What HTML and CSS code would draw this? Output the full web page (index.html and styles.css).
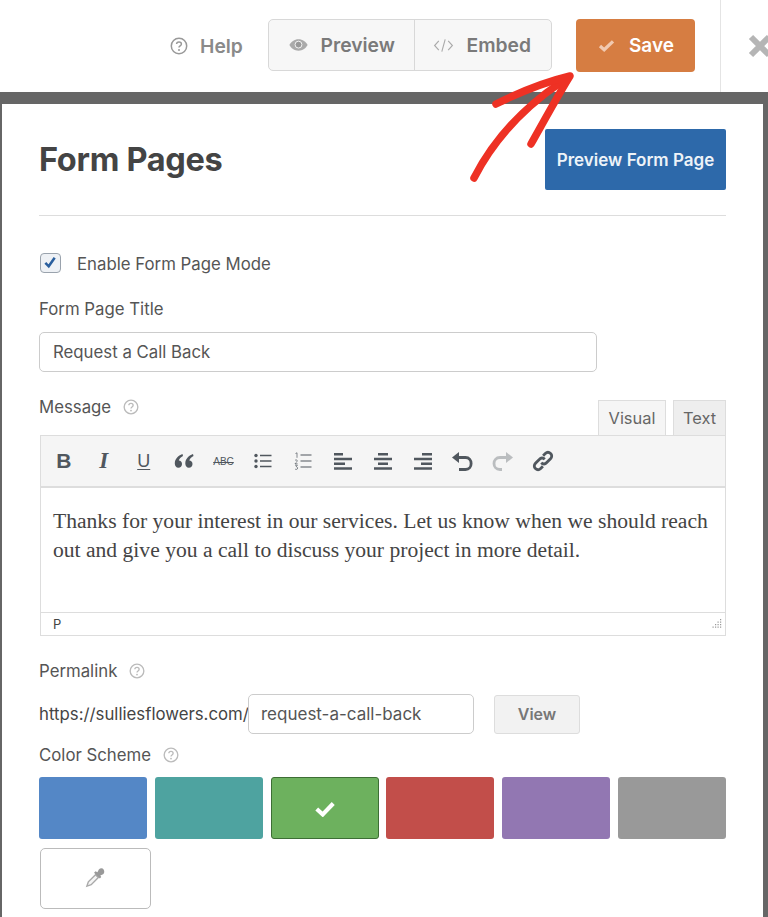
FILE: index.html
```html
<!DOCTYPE html>
<html lang="en">
<head>
<meta charset="utf-8">
<title>Form Pages</title>
<link rel="stylesheet" href="styles.css">
</head>
<body>
<header class="topbar">
  <div class="help">
    <svg class="q q-top" viewBox="0 0 18 18"><circle cx="9" cy="9" r="7.700"/><path d="M6.600 7.100c0-1.400 1.100-2.200 2.400-2.200s2.400.8 2.400 2.100c0 1.900-2.400 1.900-2.400 3.600"/><circle class="dot" cx="9" cy="13" r="1"/></svg>
    <span>Help</span>
  </div>
  <div class="btn-group">
    <div class="gbtn gbtn-preview">
      <svg class="ic-eye" viewBox="0 0 20 14"><path d="M10 1C5.600 1 2.200 3.800.4 7c1.800 3.200 5.200 6 9.600 6s7.800-2.800 9.600-6C17.800 3.800 14.400 1 10 1z"/><circle cx="10" cy="6.600" r="3.600" class="eye-in"/></svg>
      <span>Preview</span>
    </div>
    <div class="gbtn gbtn-embed">
      <svg class="ic-code" viewBox="0 0 22 16"><path d="M6 3 1.500 8 6 13M16 3l4.500 5L16 13M12.800 1.500 9.200 14.500"/></svg>
      <span>Embed</span>
    </div>
  </div>
  <div class="save">
    <svg class="ic-savecheck" viewBox="0 0 18 14"><path d="M2 7.500 6.500 11.500 16 2.500"/></svg>
    <span>Save</span>
  </div>
  <div class="closebox">
    <svg class="ic-x" viewBox="0 0 24 24"><path d="M3 3 21 21M21 3 3 21"/></svg>
  </div>
</header>

<main class="panel">
  <div class="panel-head">
    <h1>Form Pages</h1>
    <a class="preview-page">Preview Form Page</a>
  </div>
  <div class="check-row">
    <span class="checkbox"><svg viewBox="0 0 20 20"><path d="M4.500 10.500 8.500 14.500 15.500 4.500"/></svg></span>
    <span class="label">Enable Form Page Mode</span>
  </div>
  <div class="label title-label">Form Page Title</div>
  <div class="text-input title-input">Request a Call Back</div>

  <div class="msg-head">
    <div class="label with-q">Message
      <svg class="q" viewBox="0 0 18 18"><circle cx="9" cy="9" r="7.700"/><path d="M6.600 7.100c0-1.400 1.100-2.200 2.400-2.200s2.400.8 2.400 2.100c0 1.900-2.400 1.900-2.400 3.600"/><circle class="dot" cx="9" cy="13" r="1"/></svg>
    </div>
    <div class="tabs">
      <span class="tab tab-on">Visual</span>
      <span class="tab">Text</span>
    </div>
  </div>
  <div class="editor">
    <div class="toolbar">
      <span class="t-b">B</span>
      <span class="t-i">I</span>
      <span class="t-u">U</span>
      <svg class="tool t-quote" viewBox="0 0 20 16"><path d="M8.500 1C4 2.700.8 6 .8 10.500c0 2.500 1.500 4.200 3.600 4.200s3.600-1.500 3.600-3.700-1.400-3.500-3.200-3.500c.5-1.800 2-3.400 4.200-4.600zM19 1c-4.500 1.700-7.700 5-7.700 9.500 0 2.500 1.500 4.200 3.600 4.200s3.600-1.500 3.600-3.700-1.400-3.500-3.200-3.500c.5-1.800 2-3.400 4.200-4.600z"/></svg>
      <span class="t-abc">ABC</span>
      <svg class="tool t-ul" viewBox="0 0 18 16"><circle cx="2" cy="2.500" r="1.700"/><circle cx="2" cy="8" r="1.700"/><circle cx="2" cy="13.500" r="1.700"/><path d="M6 1.700h11.500v1.500H6zM6 7.200h11.500v1.500H6zM6 12.700h11.500v1.500H6z"/></svg>
      <svg class="tool t-ol" viewBox="0 0 18 18"><path d="M6.500 2.500h11v1h-11zM6.500 8.500h11v1h-11zM6.500 14.500h11v1h-11z"/><path class="thin" d="M1.500 1.500 3 .8v5M1 8.500c.6-1 2.600-.7 2.300.6-.2.800-1.800 1.600-2.300 2.700h2.600M1 13.200h2.400l-1.200 1.500c2-.1 1.900 3-.1 2.700-.4 0-.8-.2-1.100-.5"/></svg>
      <svg class="tool t-al" viewBox="0 0 18 17"><path d="M0 0h9v2.600H0zM0 4.700h18v2.600H0zM0 9.400h11v2.600H0zM0 14.200h18v2.600H0z"/></svg>
      <svg class="tool t-ac" viewBox="0 0 18 17"><path d="M4 0h10v2.600H4zM0 4.700h18v2.600H0zM4 9.400h10v2.600H4zM0 14.200h18v2.600H0z"/></svg>
      <svg class="tool t-ar" viewBox="0 0 18 17"><path d="M8 0h10v2.600H8zM0 4.700h18v2.600H0zM7 9.400h11v2.600H7zM0 14.200h18v2.600H0z"/></svg>
      <svg class="tool t-undo" viewBox="0 0 21 19"><path class="fillh" d="M0 5.500 7 0v11z"/><path class="st" d="M6 5.500h7.500c7.500 0 7.500 12 0 12H7"/></svg>
      <svg class="tool t-redo" viewBox="0 0 21 19"><path class="fillh" d="M21 5.500 14 0v11z"/><path class="st" d="M15 5.500H8c-8 0-8 12 0 12h2"/></svg>
      <svg class="tool t-link" viewBox="0 0 22 22"><path class="st" d="M9.200 12.800c1.800 1.800 4 1.400 5.300 0l4-4c1.600-1.700 1.600-3.900.1-5.300s-3.700-1.500-5.300.1l-2.200 2.200"/><path class="st" d="M12.800 9.200c-1.800-1.800-4-1.400-5.300 0l-4 4c-1.600 1.700-1.600 3.900-.1 5.300s3.700 1.500 5.300-.1l2.200-2.200"/></svg>
    </div>
    <div class="content">
      <p>Thanks for your interest in our services. Let us know when we should reach out and give you a call to discuss your project in more detail.</p>
    </div>
    <div class="status">
      <span>P</span>
      <svg class="grip" viewBox="0 0 12 12"><path d="M10 1h1.200v1.200H10zM7.500 3.500h1.200v1.200H7.500zM10 3.500h1.200v1.200H10zM5 6h1.200v1.200H5zM7.500 6h1.200v1.200H7.500zM10 6h1.200v1.200H10zM2.500 8.500h1.200v1.200H2.500zM5 8.500h1.200v1.200H5zM7.500 8.500h1.200v1.200H7.500zM10 8.500h1.200v1.200H10z"/></svg>
    </div>
  </div>

  <div class="label with-q permalink-label">Permalink
    <svg class="q" viewBox="0 0 18 18"><circle cx="9" cy="9" r="7.700"/><path d="M6.600 7.100c0-1.400 1.100-2.200 2.400-2.200s2.400.8 2.400 2.100c0 1.900-2.400 1.900-2.400 3.600"/><circle class="dot" cx="9" cy="13" r="1"/></svg>
  </div>
  <div class="permalink-row">
    <span class="url">https://sulliesflowers.com/</span>
    <div class="text-input slug">request-a-call-back</div>
    <div class="view">View</div>
  </div>

  <div class="label with-q scheme-label">Color Scheme
    <svg class="q" viewBox="0 0 18 18"><circle cx="9" cy="9" r="7.700"/><path d="M6.600 7.100c0-1.400 1.100-2.200 2.400-2.200s2.400.8 2.400 2.100c0 1.900-2.400 1.900-2.400 3.600"/><circle class="dot" cx="9" cy="13" r="1"/></svg>
  </div>
  <div class="swatches">
    <div class="swatch blue"></div>
    <div class="swatch teal"></div>
    <div class="swatch green"><svg viewBox="0 0 24 18"><path d="M3 9.500 9.500 15.500 21 3.500"/></svg></div>
    <div class="swatch red"></div>
    <div class="swatch purple"></div>
    <div class="swatch gray"></div>
  </div>
  <div class="custom">
    <svg viewBox="0 0 22 22"><path class="dropper-body" d="M11 8 3.500 15.500 2 20l4.500-1.500L14 11z"/><path class="dropper-top" d="M13 5.500l1.500-3c1.500-1.500 4-1.500 5 0s1 3.500-.5 5l-3 1.500 1 1.500-1.500 1.500-6-6L11 4.500z"/></svg>
  </div>
</main>

<svg class="arrow" viewBox="0 0 768 917">
  <path d="M474 178C491 145 516 113 560 83"/>
  <path d="M496 104C520 92 545 82 570 76 557 97 544 121 531 144"/>
</svg>
</body>
</html>
```
FILE: styles.css
```css
* { box-sizing: border-box; }
html, body { margin: 0; padding: 0; }
body {
  width: 768px;
  height: 917px;
  overflow: hidden;
  background: #fff;
  position: relative;
  font-family: Inter, "Liberation Sans", sans-serif;
  color: #555;
}
.topbar {
  height: 92px;
  display: flex;
  align-items: flex-start;
  padding-left: 170px;
  background: #fff;
}
.help {
  display: flex;
  align-items: center;
  gap: 12px;
  height: 51px;
  margin-top: 20px;
  width: 98px;
  font-size: 19.300px;
  font-weight: 600;
  color: #8a8a8a;
}
.q {
  width: 16px;
  height: 16px;
  fill: none;
  stroke: #bbb;
  stroke-width: 1.500;
  flex: none;
}
.q .dot { fill: #bbb; stroke: none; }
.q-top { width: 18px; height: 18px; stroke: #999; }
.q-top .dot { fill: #999; }
.btn-group {
  display: flex;
  width: 284px;
  height: 52px;
  margin-top: 19px;
  border: 1.500px solid #d8d8d8;
  border-radius: 5px;
  background: #f7f7f7;
  font-size: 19.300px;
  font-weight: 600;
  color: #7a7a7a;
}
.gbtn { display: flex; align-items: center; }
.gbtn-preview { width: 145.500px; padding-left: 19.500px; gap: 13px; border-right: 1.500px solid #d8d8d8; }
.gbtn-embed { flex: 1; padding-left: 18px; gap: 13px; }
.ic-eye { width: 19px; height: 14px; fill: #aaa; }
.eye-in { fill: #999; stroke: #f4f4f4; stroke-width: 1; }
.ic-code { width: 21px; height: 15px; fill: none; stroke: #aaa; stroke-width: 1.200; }
.save {
  display: flex;
  align-items: center;
  gap: 14px;
  width: 119px;
  height: 53px;
  margin: 19px 0 0 24px;
  padding-left: 22px;
  background: #d67d42;
  border-radius: 4px;
  color: #fff;
  font-size: 19px;
  font-weight: 600;
}
.ic-savecheck { width: 17px; height: 13px; fill: none; stroke: #f1c9b0; stroke-width: 3.500; }
.closebox {
  height: 92px;
  margin-left: 25px;
  flex: 1;
  border-left: 1.500px solid #e4e4e4;
  padding: 34px 0 0 27px;
  overflow: hidden;
}
.ic-x { width: 24px; height: 24px; fill: none; stroke: #b5b5b5; stroke-width: 6; display: block; }

.panel {
  height: 825px;
  border: solid #666;
  border-width: 12px 5px 0 2px;
  padding: 25px 37px 0 37px;
  background: #fff;
}
.panel-head {
  display: flex;
  justify-content: space-between;
  align-items: center;
  height: 87px;
  padding-bottom: 25px;
  border-bottom: 1px solid #ddd;
}
h1 {
  margin: 0;
  font-size: 32.500px;
  font-weight: 700;
  letter-spacing: -.3px;
  color: #444;
}
.preview-page {
  width: 181px;
  height: 61px;
  display: flex;
  align-items: center;
  justify-content: center;
  background: #2d69aa;
  border-radius: 2px;
  color: #eef3f8;
  font-size: 17px;
  font-weight: 600;
}
.label { font-size: 16.800px; color: #555; line-height: 20px; }
.check-row {
  display: flex;
  align-items: center;
  gap: 16px;
  margin: 37px 0 0 1px;
  height: 22px;
}
.checkbox {
  width: 21px;
  height: 20px;
  margin-top: -3px;
  border: 1.500px solid #9aa3ad;
  border-radius: 4px;
  background: #eef1f5;
  display: block;
}
.checkbox svg { display: block; width: 18px; height: 17px; fill: none; stroke: #2a5f9e; stroke-width: 3; }
.title-label { margin-top: 24px; }
.text-input {
  border: 1.500px solid #ccc;
  border-radius: 5px;
  background: #fff;
  display: flex;
  align-items: center;
  font-size: 16.800px;
  color: #555;
}
.title-input {
  width: 558px;
  height: 40px;
  margin-top: 13px;
  padding-left: 13px;
}
.msg-head {
  display: flex;
  justify-content: space-between;
  align-items: flex-start;
  height: 35px;
  margin: 28px 0 0 0;
}
.with-q { display: flex; align-items: center; gap: 12px; }
.msg-head .with-q { height: 14px; }
.tabs { display: flex; gap: 7px; }
.tab {
  height: 35px;
  width: 53px;
  display: flex;
  align-items: center;
  justify-content: center;
  border: 1px solid #ddd;
  border-bottom: 0;
  background: #eee;
  font-size: 16.400px;
  color: #666;
}
.tab-on { width: 68px; background: #f5f5f5; }
.editor {
  width: 686px;
  margin-left: 1px;
  border: 1px solid #ddd;
}
.toolbar {
  display: grid;
  grid-template-columns: repeat(13, 39.900px);
  align-items: center;
  justify-items: center;
  height: 52px;
  background: #f5f5f5;
  border-bottom: 2px solid #ddd;
  padding-left: 3px;
  color: #50575e;
}
.toolbar span { display: block; text-align: center; }
.t-b { font-family: "Liberation Sans", sans-serif; font-weight: 700; font-size: 21px; }
.t-i { font-family: "Liberation Serif", serif; font-style: italic; font-weight: 700; font-size: 23px; }
.t-u { font-family: "Liberation Sans", sans-serif; font-size: 18px; text-decoration: underline; text-underline-offset: 2px; }
.tool { fill: #50575e; display: block; }
.t-quote { width: 20px; height: 16px; }
.t-abc { font-family: "Liberation Sans", sans-serif; font-size: 10px; text-decoration: line-through; }
.t-ul { width: 18px; height: 16px; }
.t-ol { width: 18px; height: 18px; }
.t-ol .thin { fill: none; stroke: #50575e; stroke-width: .7; }
.t-al, .t-ac, .t-ar { width: 18px; height: 17px; }
.t-undo, .t-redo { width: 21px; height: 19px; }
.t-redo { opacity: .35; }
.t-link { width: 22px; height: 22px; }
.st { fill: none; stroke: #50575e; stroke-width: 2.800; }
.content {
  height: 124px;
  padding: 19px 12px 0;
  font-family: "Liberation Serif", serif;
  font-size: 21.600px;
  line-height: 29px;
  color: #444;
  background: #fff;
}
.content p { margin: 0; }
.status {
  height: 23px;
  display: flex;
  align-items: center;
  justify-content: space-between;
  padding: 0 3px 0 12px;
  border-top: 1px solid #ddd;
  font-size: 13px;
  color: #444;
}
.grip { width: 12px; height: 12px; fill: #999; }
.permalink-label { margin-top: 25px; }
.permalink-row {
  display: flex;
  align-items: center;
  margin-top: 13px;
  height: 40px;
}
.url { font-size: 16.800px; color: #444; width: 209px; white-space: nowrap; }
.slug { width: 226px; height: 40px; padding-left: 12px; font-size: 17px; }
.view {
  width: 86px;
  height: 39px;
  margin-left: 20px;
  display: flex;
  align-items: center;
  justify-content: center;
  background: #f2f2f2;
  border: 1.500px solid #ddd;
  border-radius: 3px;
  font-size: 16px;
  font-weight: 600;
  color: #777;
}
.scheme-label { margin-top: 11px; }
.swatches {
  display: grid;
  grid-template-columns: repeat(6, 1fr);
  gap: 7.800px;
  margin-top: 12px;
}
.swatch { height: 62px; border-radius: 3px; display: flex; align-items: center; justify-content: center; }
.swatch svg { width: 22px; height: 17px; fill: none; stroke: #fff; stroke-width: 4.500; }
.blue { background: #5487c6; }
.teal { background: #4ea3a0; }
.green { background: #6db15e; border: 1px solid #3d6e35; }
.red { background: #c24e4a; }
.purple { background: #9277b2; }
.gray { background: #999; }
.custom {
  width: 111px;
  height: 61px;
  margin: 9px 0 0 1px;
  border: 1.500px solid #bbb;
  border-radius: 5px;
  display: flex;
  align-items: center;
  justify-content: center;
}
.custom svg { width: 21px; height: 21px; margin-top: -2px; }
.dropper-top { fill: #999; }
.dropper-body { fill: #f4f4f4; stroke: #aaa; stroke-width: 1.500; }
.arrow {
  position: absolute;
  left: 0;
  top: 0;
  width: 768px;
  height: 917px;
  fill: none;
  stroke: #ee3124;
  stroke-width: 7.500;
  stroke-linecap: round;
  stroke-linejoin: round;
  pointer-events: none;
}
```
